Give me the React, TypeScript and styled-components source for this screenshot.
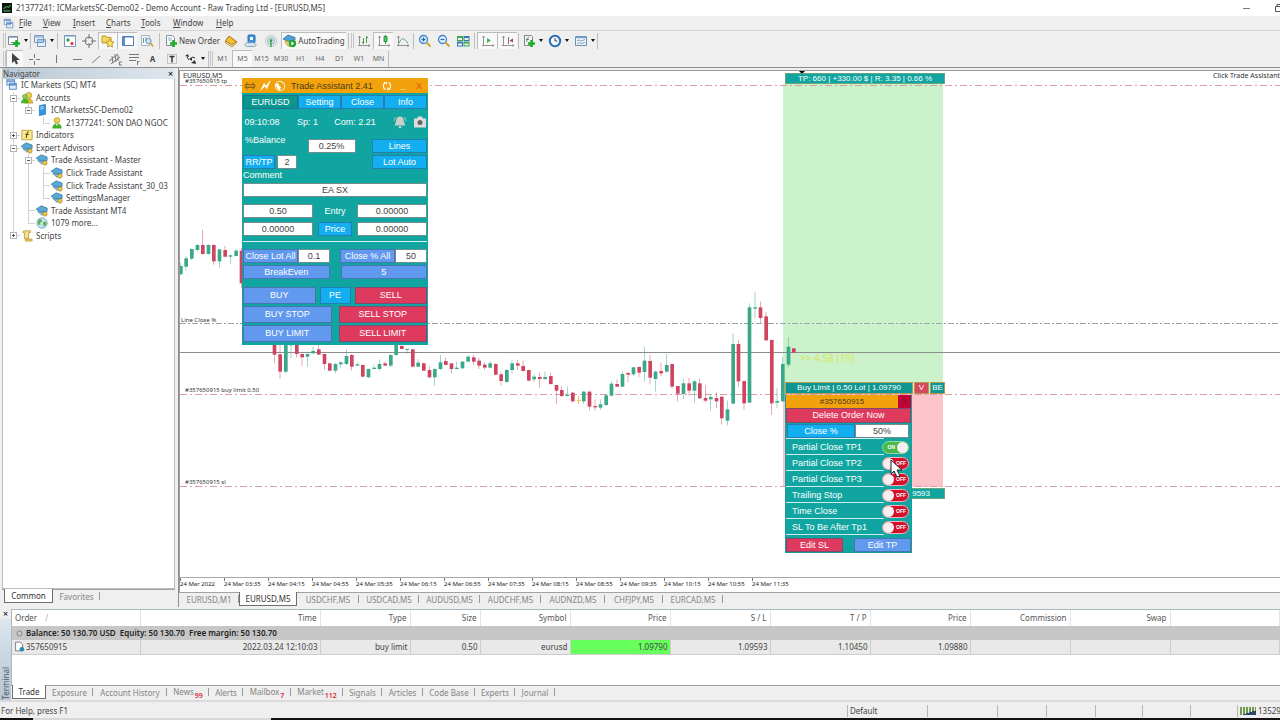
import React from "react";
import styled, { createGlobalStyle, css } from "styled-components";

const ui = `"Noto Sans", "Open Sans", sans-serif`;
const arial = `"Liberation Sans", Arial, sans-serif`;

const teal = "#10a5a0";
const sky = "#12aef0";
const cornflower = "#6199ee";
const crimson = "#dd3a5e";
const orange = "#f2a30c";

const Global = createGlobalStyle`
  * { box-sizing: border-box; }
  body { margin: 0; background: #efefef; font: 8px/12px ${ui}; color: #444; }
  button, input { font: inherit; color: inherit; margin: 0; padding: 0; border: 0; background: none; border-radius: 0; }
  ul { list-style: none; margin: 0; padding: 0; }
  svg { display: block; flex: none; }
`;

const Window = styled.div`
  min-height: 100vh;
  display: flex;
  flex-direction: column;
  overflow: hidden;
`;

/* ---------- title and menu ---------- */

const TitleBar = styled.header`
  display: flex;
  align-items: center;
  height: 16px;
  padding-left: 2px;
  background: #fff;
  gap: 4px;
  overflow: hidden;
  white-space: nowrap;
`;
const WindowButtons = styled.div`
  display: flex;
  gap: 24px;
  margin-left: auto;
  margin-right: -2px;
`;
const WindowButton = styled.button`
  width: 8px;
  height: 10px;
`;
const MenuBar = styled.nav`
  display: flex;
  align-items: center;
  height: 15px;
  padding-left: 3px;
  border-bottom: 1px solid #d6d6d6;
`;
const MenuItem = styled.button<{ $w: number }>`
  width: ${(p) => p.$w}px;
  text-align: left;
  padding-left: 5px;
  &::first-letter { text-decoration: underline; }
`;

/* ---------- toolbars ---------- */

const Toolbar = styled.div`
  display: flex;
  align-items: center;
  height: 18px;
  padding: 1px 0 0 3px;
`;
const Grip = styled.span`
  width: 3px;
  height: 15px;
  border: solid #c4c4c4;
  border-width: 0 1px;
`;
const Sep = styled.span<{ $m?: number }>`
  width: 1px;
  height: 16px;
  margin: 0 ${(p) => p.$m ?? 2}px;
  background: #bdbdbd;
`;
const Tool = styled.button<{ $w?: number; $on?: boolean }>`
  display: flex;
  align-items: center;
  justify-content: center;
  flex: none;
  gap: 1px;
  width: ${(p) => p.$w ?? 19}px;
  height: 17px;
  white-space: nowrap;
  ${(p) =>
    p.$on &&
    css`
      background: #f8f8f8;
      border: solid #bcbcbc;
      border-width: 1px 0 0 1px;
    `}
`;
const Period = styled(Tool)`
  font-size: 7px;
  color: #666;
`;
const Caret = styled.span`
  margin-left: 2px;
  border: solid transparent;
  border-width: 3px 2px 0;
  border-top-color: #111;
`;

const Icon = ({ s = 14, children }: { s?: number; children: React.ReactNode }) => (
  <svg width={s} height={s} viewBox="0 0 14 14" fill="none" aria-hidden="true">
    {children}
  </svg>
);
const Plus = () => <path d="M9.5 6v7M6 9.5h7" stroke="#1fae2b" strokeWidth="2.6" />;
const NewChartIcon = () => (
  <Icon><path d="M1.5 2.5h9v8h-9z" fill="#fff" stroke="#7d8b99" /><path d="M2 3.5h8" stroke="#9cc0e4" /><path d="M4 8.500h4" stroke="#5a9a60" /><Plus /></Icon>
);
const ProfilesIcon = () => (
  <Icon><path d="M1.5 1.5h9v7h-9zM4.5 5.5h8v7h-8z" fill="#e4f0fb" stroke="#7d98b8" /><path d="M2 3h8M5 7h7" stroke="#6da0d8" strokeWidth="1.2" /></Icon>
);
const MarketIcon = () => (
  <Icon><path d="M1.5 1.5h11v11h-11z" fill="#fff" stroke="#7c98b6" /><path d="M2 2.5h10" stroke="#a8cbec" /><circle cx="5" cy="6" r="1.7" fill="#2aa84a" /><circle cx="9" cy="9.5" r="1.7" fill="#e0474a" /></Icon>
);
const TargetIcon = () => (
  <Icon><circle cx="7" cy="7" r="4" stroke="#777" /><path d="M7 0v5M7 9v5M0 7h5M9 7h5" stroke="#777" /></Icon>
);
const FolderStarIcon = () => (
  <Icon><path d="M1 2h4l1 1.500h4V9H1z" fill="#f5d75e" stroke="#b99a2c" /><path d="M9 5l1.300 2.600 2.700.4-2 2 .5 3L9 11.600 6.500 13l.5-3-2-2 2.700-.4z" fill="#fbe36a" stroke="#b08a1c" strokeWidth=".8" /></Icon>
);
const PanelIcon = () => (
  <Icon><path d="M1.500 2.500h11v9h-11z" fill="#fff" stroke="#4d7fb5" /><path d="M2 3h2v8H2z" fill="#5591cc" /><path d="M4 3.500h8" stroke="#9ec4e8" /></Icon>
);
const TesterIcon = () => (
  <Icon><path d="M1.500 1.500h8v10h-8z" fill="#f4f8fc" stroke="#a5b5c5" /><path d="M3.500 9V4M6 7V3" stroke="#6e9a7c" /><circle cx="8.500" cy="7" r="2.600" fill="#cfe6fa" stroke="#6a93bb" /><path d="M10.500 9l2.500 3.500" stroke="#d0a23a" strokeWidth="1.600" /></Icon>
);
const OrderIcon = () => (
  <Icon><path d="M2.500 1.500h6l2 2v8h-8z" fill="#fff" stroke="#8090a0" /><path d="M4 4h4M4 6h4" stroke="#8fb1d1" /><Plus /></Icon>
);
const BookIcon = () => (
  <Icon><path d="M1.500 7L5 2l7.500 5.500L8 11z" fill="#f3bf35" stroke="#a87413" /><path d="M1.500 7l.3 2L8 13l4.500-4V7.500L8 11z" stroke="#a87413" fill="#fff0bd" strokeWidth=".8" /></Icon>
);
const VpsIcon = () => (
  <Icon><rect x="4" y="1" width="7" height="7.500" rx="1" fill="#3d93e2" stroke="#2b6db0" /><path d="M6 3h3v3H6z" fill="#fff" /><path d="M1 11c0-2 2-3 4-2 3-1 7 0 7 2 0 1-1 1.500-2 1.500H3c-1 0-2-.5-2-1.500z" fill="#d8e6f2" stroke="#7898b5" strokeWidth=".8" /></Icon>
);
const SignalIcon = () => (
  <Icon><circle cx="7" cy="7" r="5.500" stroke="#b4c8d0" /><circle cx="7" cy="7" r="3.300" stroke="#7fabbd" /><circle cx="7" cy="6.500" r="1.500" fill="#37a34a" /><path d="M7 7v6" stroke="#37a34a" strokeWidth="1.400" /></Icon>
);
const AutoIcon = () => (
  <Icon><path d="M0 5l5-4 7 2.500V6L7 8z" fill="#4d9fd8" stroke="#2d76a8" strokeWidth=".8" /><path d="M2 6.500c0 3 3 6 5 6V8z" fill="#f0d060" stroke="#a98c2b" strokeWidth=".7" /><circle cx="9.500" cy="9.500" r="3.700" fill="#1fa838" /><path d="M8.300 7.500v4l3-2z" fill="#fff" /></Icon>
);
const Axes = () => <path d="M2.500 2v10M1 11.500h12M1.500 3.500l1-1.500 1 1.500M11.500 10.500l1.500 1-1.500 1" stroke="#888" strokeWidth=".9" />;
const BarsIcon = () => (<Icon><Axes /><path d="M6.500 4v6M6.500 8.500h-1.500M9.500 2v7M9.500 3.500h1.500" stroke="#4c9a5c" /></Icon>);
const CandleIcon = () => (<Icon><Axes /><path d="M8.500 1v9" stroke="#2a9a3c" /><path d="M7 2.500h3v5H7z" fill="#45c95a" stroke="#2a9a3c" /></Icon>);
const LineIcon = () => (<Icon><Axes /><path d="M3 9c2-4 4-5 5-4s2 2 4 4" stroke="#4c9a5c" /></Icon>);
const ZoomIcon = ({ plus }: { plus?: boolean }) => (
  <Icon><circle cx="5.500" cy="5.500" r="4" fill="#e3f2fd" stroke="#3e86c8" strokeWidth="1.300" /><path d={plus ? "M3.500 5.500h4M5.500 3.500v4" : "M3.500 5.500h4"} stroke="#2b6cab" strokeWidth="1.300" /><path d="M8.500 8.500l4 4" stroke="#d3a434" strokeWidth="2" /></Icon>
);
const TileIcon = () => (
  <Icon><path d="M1 2h6v5H1zM7.500 7.500h6v5h-6z" fill="#3fa54d" /><path d="M7.500 2h6v5h-6zM1 7.500h6v5H1z" fill="#3877b8" /><path d="M2 4h4v2H2zM8.500 4h4v2h-4zM2 9.500h4v2H2zM8.500 9.500h4v2h-4z" fill="#e8f4ea" /></Icon>
);
const ScrollIcon = () => (<Icon><Axes /><path d="M6 4v5l4-2.500z" fill="#45b35a" /></Icon>);
const ShiftIcon = () => (<Icon><Axes /><path d="M7.500 3v7" stroke="#777" /><path d="M12 4.500v4L8.500 6.500z" fill="#a04848" /></Icon>);
const IndicatorIcon = () => (
  <Icon><path d="M2.500 1.500h7l1 1v9h-8z" fill="#eef3f0" stroke="#7d8b85" /><path d="M4 8c1.500 0 1-5 3-5M4 5.500h3" stroke="#666" strokeWidth=".8" /><Plus /></Icon>
);
const ClockIcon = () => (
  <Icon><circle cx="7" cy="7" r="5.200" fill="#f4f9fe" stroke="#2b6cb2" strokeWidth="2" /><path d="M7 4v3h2.500" stroke="#444" /></Icon>
);
const TemplateIcon = () => (
  <Icon><path d="M1.500 2.500h11v9h-11z" fill="#eef5fb" stroke="#7590ab" /><path d="M2 3.500h10" stroke="#6fa3d6" strokeWidth="1.500" /><path d="M3 7l2-1 2 1 4-1.500M3 10l2-1.500 2 1 4-1" stroke="#6d8aa5" strokeWidth=".8" /></Icon>
);
const Stroke = ({ d, w = 1 }: { d: string; w?: number }) => (<Icon><path d={d} stroke="#777" strokeWidth={w} /></Icon>);

const DropTool = ({ w, label, children }: { w: number; label: string; children: React.ReactNode }) => (
  <Tool $w={w} aria-label={label}>{children}<Caret /></Tool>
);

const TopToolbars = () => (
  <>
    <Toolbar>
      <Grip />
      <DropTool w={23} label="New chart"><NewChartIcon /></DropTool>
      <Sep $m={1} />
      <DropTool w={23} label="Profiles"><ProfilesIcon /></DropTool>
      <Sep />
      <Tool aria-label="Market watch"><MarketIcon /></Tool>
      <Tool aria-label="Data window"><TargetIcon /></Tool>
      <Tool $on aria-label="Navigator"><FolderStarIcon /></Tool>
      <Tool $w={20} $on aria-label="Terminal"><PanelIcon /></Tool>
      <Tool aria-label="Strategy tester"><TesterIcon /></Tool>
      <Sep $m={3} />
      <Tool $w={58}><OrderIcon />New Order</Tool>
      <Tool $w={20} aria-label="MetaEditor"><BookIcon /></Tool>
      <Tool $w={20} aria-label="Virtual hosting"><VpsIcon /></Tool>
      <Tool $w={20} aria-label="Signals"><SignalIcon /></Tool>
      <Tool $w={65} $on><AutoIcon />AutoTrading</Tool>
      <Sep />
      <Grip />
      <Tool aria-label="Bar chart"><BarsIcon /></Tool>
      <Tool $w={20} $on aria-label="Candlesticks"><CandleIcon /></Tool>
      <Tool aria-label="Line chart"><LineIcon /></Tool>
      <Sep $m={1} />
      <Tool aria-label="Zoom in"><ZoomIcon plus /></Tool>
      <Tool aria-label="Zoom out"><ZoomIcon /></Tool>
      <Tool aria-label="Tile windows"><TileIcon /></Tool>
      <Sep />
      <Tool $w={20} $on aria-label="Auto scroll"><ScrollIcon /></Tool>
      <Tool $w={20} $on aria-label="Chart shift"><ShiftIcon /></Tool>
      <Sep $m={1} />
      <DropTool w={25} label="Indicators"><IndicatorIcon /></DropTool>
      <DropTool w={26} label="Periods"><ClockIcon /></DropTool>
      <DropTool w={26} label="Templates"><TemplateIcon /></DropTool>
      <Sep $m={0} />
    </Toolbar>
    <Toolbar>
      <Grip />
      <Tool $w={17} $on aria-label="Cursor">
        <Icon><path d="M4 1v10l2.500-2 1.500 3.500 2-1L8.500 8H12z" fill="#444" /></Icon>
      </Tool>
      <Tool $w={21} aria-label="Crosshair"><Stroke d="M7.500 2v4M7.500 9v4M2 7.500h4M9 7.500h4" /></Tool>
      <Tool $w={23} aria-label="Vertical line"><Stroke d="M7.500 3v8" /></Tool>
      <Tool aria-label="Horizontal line"><Stroke d="M3 7.500h9" /></Tool>
      <Tool aria-label="Trend line"><Stroke d="M3 11l8-7" /></Tool>
      <Tool aria-label="Channel"><Stroke d="M1 9l9-7M3 12l9-7M4 4l1 7M7 2l1 8M10 3v6M11 10h3M11 13h3M11.500 10v3" /></Tool>
      <Tool aria-label="Fibonacci"><Stroke d="M2 2.500h10M2 5.500h10M2 8.500h7M10.500 9v4M10.500 9.500h2" /></Tool>
      <Tool><b>A</b></Tool>
      <Tool $w={20} aria-label="Text label">
        <Icon><path d="M2.500 2.500h9v9h-9z" stroke="#999" strokeDasharray="1 1" /><path d="M4.500 4.500h5M7 4.500v6" stroke="#333" strokeWidth="1.500" /></Icon>
      </Tool>
      <DropTool w={25} label="Arrows">
        <Icon><path d="M1 4l3-2 1 3zM5 7l3-2v4zM7 11l4-3 1 4z" fill="#333" /><path d="M3 5l2 3M8 5l3 1" stroke="#333" /></Icon>
      </DropTool>
      <Sep $m={1} />
      <Grip />
      {["M1", "M5", "M15", "M30", "H1", "H4", "D1", "W1", "MN"].map((p, i) => (
        <Period key={p} $w={i % 2 ? 20 : 19} $on={p === "M5"}>{p}</Period>
      ))}
      <Sep $m={0} />
    </Toolbar>
  </>
);

/* ---------- navigator ---------- */

const Workspace = styled.main`
  flex: 1;
  display: flex;
  min-height: 0;
  border-top: 1px solid #8e8e8e;
`;
const Navigator = styled.aside`
  flex: none;
  width: 178px;
  display: flex;
  flex-direction: column;
  padding: 0 3px 3px 2px;
`;
const NavHeader = styled.div`
  display: flex;
  justify-content: space-between;
  align-items: center;
  height: 11px;
  padding: 0 1px;
  background: linear-gradient(90deg, #b9c7d3, #dfe7ee);
`;
const CloseMark = styled.button`
  width: 7px;
  height: 9px;
  font-size: 9px;
  line-height: 9px;
  color: #000;
`;
const TreeBox = styled.div`
  flex: 1;
  background: #fff;
  border: 1px solid #bdbdbd;
  border-top: 0;
`;
const Tree = styled.ul`
  display: grid;
  grid-auto-rows: 1fr;
  height: 163px;
  padding-left: 3px;
`;
const TreeItem = styled.li`
  display: flex;
  align-items: stretch;
`;
const Guide = styled.span<{ $t: string; $last: boolean }>`
  position: relative;
  width: 15px;
  &::before {
    content: "";
    position: absolute;
    left: 7px;
    top: 0;
    height: ${(p) => (p.$t === "e" ? "50%" : "100%")};
    border-left: ${(p) => (p.$t === " " ? 0 : 1)}px solid #d2d2d2;
  }
  &::after {
    content: "";
    position: absolute;
    left: 7px;
    top: 6px;
    width: 7px;
    border-top: ${(p) => (p.$last ? 1 : 0)}px solid #d2d2d2;
  }
`;
const Expander = styled.button`
  position: absolute;
  z-index: 1;
  left: 4px;
  top: 3px;
  width: 7px;
  height: 7px;
  background: #fff;
  border: 1px solid #b5b5b5;
`;
const TreeLabel = styled.span`
  display: flex;
  align-items: center;
  gap: 3px;
  white-space: nowrap;
`;

const ServersIcon = () => (<Icon s={12}><path d="M1 1h9v6H1zM4 5h8v7H4z" fill="#dfeefc" stroke="#5b8fc9" strokeWidth="1.200" /><path d="M1 2.500h9M4 6.500h8" stroke="#5b8fc9" strokeWidth="1.600" /></Icon>);
const AccountsIcon = () => (<Icon s={12}><circle cx="9" cy="4" r="3.500" fill="#f0cd42" stroke="#9d7f18" strokeWidth=".7" /><path d="M4 13c0-7 10-7 10 0z" fill="#e6b92e" stroke="#9d7f18" strokeWidth=".5" /><circle cx="4.500" cy="5.500" r="2.700" fill="#8bd65a" stroke="#3a8f24" strokeWidth=".7" /><path d="M0 13c0-7 9-7 9 0z" fill="#46b52d" /></Icon>);
const ServerIcon = () => (<Icon s={12}><path d="M4 2l7-1.500V12L4 13.500z" fill="#2f97e6" stroke="#1c6fb3" strokeWidth=".8" /><path d="M5 4l4-1M5 6l4-1" stroke="#d4ecff" /></Icon>);
const UserIcon = () => (<Icon s={12}><circle cx="7" cy="4" r="3.300" fill="#f0cf54" stroke="#a3831e" strokeWidth=".7" /><path d="M1.500 13.500c0-8 11-8 11 0z" fill="#3fae2a" /><path d="M6 8l1 3 1-3z" fill="#fff" /></Icon>);
const FxIcon = () => (<Icon s={12}><path d="M1 1.500h12v11H1z" fill="#fbe98a" stroke="#b59a35" /><path d="M9 3.500c-2-.5-2 2-3 7M5 6.500h4" stroke="#4c4220" strokeWidth="1.200" /></Icon>);
const HatIcon = () => (<Icon s={12}><path d="M0 5L6 1l7 2.500 0 4L7 8.500z" fill="#58a8d8" stroke="#2f759f" strokeWidth=".8" /><path d="M2 7.500l5 4.500 4-4-4 .5z" fill="#8fc7e2" stroke="#2f759f" strokeWidth=".8" /><circle cx="10.500" cy="10.500" r="2.500" fill="#f3c843" stroke="#a07c1b" strokeWidth=".8" /></Icon>);
const GlobeIcon = () => (<Icon s={12}><circle cx="7" cy="7" r="6" fill="#c8e6f2" stroke="#4a93b0" strokeWidth=".8" /><path d="M3 3c3-1 5 0 4 2s-3 1-2 3-2 2-3-1zM9 5l3 1v3l-3 2-1-3z" fill="#5fb348" /></Icon>);
const ScrollDocIcon = () => (<Icon s={12}><path d="M3 1h8v2H9v7H4V3H2z" fill="#f5e08a" stroke="#b1963a" strokeWidth=".9" /><path d="M5 10.500h8v2.500H5z" fill="#e8c94f" stroke="#b1963a" strokeWidth=".7" /></Icon>);

const tree: { g: string; box?: "+" | "-"; icon: React.ReactNode; text: string }[] = [
  { g: "", icon: <ServersIcon />, text: "IC Markets (SC) MT4" },
  { g: "t", box: "-", icon: <AccountsIcon />, text: "Accounts" },
  { g: "|e", box: "-", icon: <ServerIcon />, text: "ICMarketsSC-Demo02" },
  { g: "| e", icon: <UserIcon />, text: "21377241: SON DAO NGOC" },
  { g: "t", box: "+", icon: <FxIcon />, text: "Indicators" },
  { g: "t", box: "-", icon: <HatIcon />, text: "Expert Advisors" },
  { g: "|t", box: "-", icon: <HatIcon />, text: "Trade Assistant - Master" },
  { g: "||t", icon: <HatIcon />, text: "Click Trade Assistant" },
  { g: "||t", icon: <HatIcon />, text: "Click Trade Assistant_30_03" },
  { g: "||e", icon: <HatIcon />, text: "SettingsManager" },
  { g: "|t", icon: <HatIcon />, text: "Trade Assistant MT4" },
  { g: "|e", icon: <GlobeIcon />, text: "1079 more..." },
  { g: "e", box: "+", icon: <ScrollDocIcon />, text: "Scripts" },
];

/* ---------- tab strips ---------- */

const TabStrip = styled.div<{ $pad?: number }>`
  display: flex;
  flex: none;
  height: 15px;
  padding-left: ${(p) => p.$pad ?? 0}px;
  border-top: 1px solid #a2a2a2;
`;
const Tab = styled.button<{ $w: number; $on?: boolean }>`
  position: relative;
  flex: none;
  width: ${(p) => p.$w}px;
  height: 14px;
  margin-top: -1px;
  line-height: 13px;
  white-space: nowrap;
  color: #858585;
  ${(p) =>
    p.$on
      ? css`
          color: #333;
          background: #fff;
          border: solid #6e6e6e;
          border-width: 0 1px 1px;
        `
      : css`
          &::after {
            content: "";
            position: absolute;
            right: 0;
            top: 3px;
            height: 8px;
            border-right: 1px solid #9a9a9a;
          }
        `}
`;
const Count = styled.sub`
  margin-left: 1px;
  font-size: 7px;
  line-height: 7px;
  color: #d8283c;
  font-weight: 600;
`;

/* ---------- chart ---------- */

const ChartPane = styled.section`
  flex: 1;
  min-width: 0;
  display: flex;
  flex-direction: column;
  border-left: 1px solid #8e8e8e;
`;
const ChartFrame = styled.div`
  flex: 1;
  display: flex;
  flex-direction: column;
  margin-top: 2px;
  border: solid #9a9a9a;
  border-width: 1px 0 0 1px;
  background: #fff;
`;
const Canvas = styled.div`
  position: relative;
  flex: 1;
  overflow: hidden;
  font-size: 7px;
  line-height: 8px;
`;
const Drawing = styled.svg`
  position: absolute;
  inset: 0;
  width: 100%;
  height: 100%;
`;
const ChartNote = styled.span<{ $x: number; $y: number; $c?: string; $s?: number }>`
  position: absolute;
  left: ${(p) => p.$x}px;
  top: ${(p) => p.$y}px;
  white-space: nowrap;
  color: ${(p) => p.$c ?? "#333"};
  font-size: ${(p) => p.$s ?? 7}px;
`;
const ExpertName = styled.span`
  position: absolute;
  right: 0;
  top: 1px;
  white-space: nowrap;
  color: #333;
`;
const TimeAxis = styled.div`
  display: flex;
  height: 15px;
  border-top: 1px solid #a8a8a8;
  overflow: hidden;
  font-size: 6px;
  line-height: 12px;
  color: #222;
`;
const Tick = styled.span`
  position: relative;
  flex: none;
  width: 44px;
  white-space: nowrap;
  &::before {
    content: "";
    position: absolute;
    height: 3px;
    border-left: 1px solid #777;
  }
`;
const Floating = styled.div<{ $x: number; $y: number; $w: number }>`
  position: absolute;
  left: ${(p) => p.$x}px;
  top: ${(p) => p.$y}px;
  width: ${(p) => p.$w}px;
  font: 9px/12px ${arial};
  color: #fff;
`;

const G = "#3aa889";
const R = "#cf4560";
type Candle = [x: number, top: number, bottom: number, high: number, low: number, up: 0 | 1];
/* Candle values are in thirds of a pixel inside each block. */
const early: Candle[] = [
  [14, 138, 163, 128, 165, 1], [30, 115, 140, 108, 153, 1], [47, 87, 116, 85, 120, 1], [64, 75, 90, 73, 95, 1],
  [80, 75, 102, 30, 104, 0], [97, 75, 102, 73, 104, 1], [113, 75, 124, 73, 134, 0], [130, 88, 124, 88, 143, 1],
  [147, 90, 110, 78, 112, 0], [163, 106, 110, 103, 132, 1], [180, 92, 108, 86, 110, 1], [196, 92, 190, 84, 205, 0],
  [295, 370, 404, 370, 430, 0], [312, 403, 455, 375, 476, 0], [329, 370, 455, 370, 460, 1], [345, 370, 376, 370, 415, 1],
  [362, 370, 402, 370, 413, 0], [378, 402, 412, 400, 438, 0], [394, 402, 410, 395, 440, 1], [411, 393, 400, 380, 402, 1],
  [428, 388, 404, 375, 404, 0], [445, 402, 432, 402, 450, 0], [461, 430, 452, 428, 454, 0], [478, 432, 452, 428, 460, 1],
  [494, 427, 433, 425, 443, 1], [511, 408, 432, 388, 435, 1], [527, 405, 440, 403, 452, 0], [544, 433, 437, 425, 437, 1],
  [560, 435, 470, 433, 472, 0], [577, 447, 472, 445, 473, 1], [594, 443, 447, 434, 448, 1], [610, 432, 447, 418, 452, 1],
  [627, 430, 437, 424, 437, 0], [644, 405, 437, 403, 440, 1], [660, 370, 405, 370, 408, 1], [677, 378, 387, 376, 388, 0],
  [693, 387, 390, 386, 402, 1], [710, 388, 440, 387, 441, 0], [726, 428, 440, 417, 441, 1], [743, 430, 452, 427, 453, 0],
  [760, 450, 472, 440, 473, 0], [776, 447, 472, 445, 498, 1], [793, 427, 447, 405, 450, 1], [809, 423, 435, 413, 435, 0],
  [826, 430, 447, 430, 460, 0], [842, 443, 447, 425, 448, 1], [859, 425, 445, 423, 446, 1], [876, 410, 425, 405, 426, 1],
  [893, 412, 425, 405, 435, 0], [909, 422, 437, 413, 447, 0], [926, 434, 443, 427, 450, 0], [942, 430, 443, 423, 444, 1],
  [959, 432, 464, 430, 466, 0], [975, 463, 483, 455, 497, 0], [992, 450, 486, 447, 487, 1], [1008, 430, 450, 418, 460, 1],
  [1025, 430, 437, 420, 450, 0],
];
const late: Candle[] = [
  [9, 258, 273, 242, 275, 0], [26, 270, 302, 269, 303, 0], [42, 290, 298, 283, 306, 1], [59, 291, 297, 278, 323, 0],
  [75, 291, 297, 275, 300, 1], [92, 288, 312, 278, 314, 0], [109, 315, 332, 315, 372, 0], [125, 330, 348, 318, 351, 0],
  [142, 344, 348, 320, 349, 1], [158, 338, 364, 336, 368, 0], [191, 335, 364, 333, 372, 1], [208, 335, 380, 333, 392, 0],
  [225, 378, 382, 358, 392, 0], [241, 373, 383, 358, 390, 1], [258, 346, 375, 342, 378, 1], [274, 311, 347, 303, 349, 1],
  [291, 312, 320, 298, 320, 0], [307, 282, 320, 274, 321, 1], [324, 279, 284, 276, 307, 0], [340, 262, 283, 260, 288, 1],
  [357, 261, 278, 259, 292, 0], [373, 242, 276, 200, 306, 1], [390, 243, 293, 225, 313, 0], [406, 275, 297, 272, 335, 1],
  [423, 273, 280, 248, 288, 0], [440, 255, 275, 222, 278, 1], [456, 252, 320, 252, 325, 0], [473, 318, 341, 318, 365, 0],
  [490, 310, 342, 298, 358, 1], [507, 310, 332, 294, 348, 0], [523, 304, 332, 300, 370, 1], [539, 310, 355, 296, 357, 0],
  [556, 354, 362, 316, 368, 0], [572, 351, 358, 342, 392, 1], [589, 354, 364, 337, 385, 0], [605, 350, 415, 350, 433, 0],
  [622, 388, 422, 362, 436, 1], [639, 192, 371, 160, 371, 1], [655, 192, 304, 180, 320, 0], [672, 303, 370, 303, 390, 0],
  [688, 82, 368, 70, 368, 1], [705, 82, 86, 35, 116, 1], [721, 82, 114, 65, 130, 0], [738, 109, 181, 96, 183, 0],
  [755, 180, 370, 178, 405, 0], [771, 363, 368, 325, 384, 1], [788, 252, 364, 230, 366, 1], [805, 200, 254, 172, 262, 1],
  [821, 205, 218, 204, 219, 0],
];
const Candles = ({ data, ox, oy }: { data: Candle[]; ox: number; oy: number }) => (
  <g transform={`translate(${ox} ${oy}) scale(0.33333)`}>
    {data.map(([x, top, bottom, high, low, up]) => (
      <g key={x} fill={up ? G : R}>
        <rect x={x - 1} y={high} width="2" height={low - high} opacity=".7" />
        <rect x={x - 5} y={top} width="11" height={bottom - top} />
      </g>
    ))}
  </g>
);

const ChartDrawing = () => (
  <Drawing aria-hidden="true">
    <g transform="translate(-180 -71)">
      <rect x="783" y="84" width="160" height="310" fill="#ccf2cb" />
      <rect x="783" y="394" width="160" height="93" fill="#fcc3cb" />
      <g stroke="#dd9ba6" strokeDasharray="7 3 2 3">
        <path d="M180 85.500H2600M180 394.500H2600M180 486.500H2600" />
      </g>
      <path d="M180 323.500H2600" stroke="#9aa6a6" strokeDasharray="6 2 2 2" />
      <path d="M180 352.500H2600" stroke="#8c8c8c" />
      <Candles data={early} ox={176} oy={220} />
      <Candles data={late} ox={520} oy={280} />
      <path d="M578.500 396v8M577 400.500h4" stroke="#f3c65a" />
      <path d="M799 71h6l-3 3z" fill="#000" />
    </g>
  </Drawing>
);

/* ---------- trade assistant panel ---------- */

const TradePanel = styled(Floating)`
  background: ${teal};
  padding-bottom: 3px;
`;
const PanelTitle = styled.div`
  display: flex;
  align-items: center;
  height: 15px;
  padding: 0 1px 0 2px;
  background: ${orange};
  color: #4c3a1c;
`;
const TitleIcons = styled.div`
  display: flex;
  gap: 3px;
  width: 47px;
`;
const TitleText = styled.span`
  flex: 1;
  font-size: 9px;
`;
const TitleButton = styled.button<{ $c?: string }>`
  width: 16px;
  display: flex;
  justify-content: center;
  color: ${(p) => p.$c ?? "#fff"};
`;
const PanelRow = styled.div<{ $mt?: number; $gap?: number; $end?: boolean }>`
  display: flex;
  align-items: ${(p) => (p.$end ? "flex-end" : "center")};
  justify-content: space-between;
  gap: ${(p) => p.$gap ?? 0}px;
  margin-top: ${(p) => p.$mt ?? 0}px;
  padding: 0 1px;
`;
const PanelButton = styled.button<{ $bg: string; $w?: number; $h?: number }>`
  flex: ${(p) => (p.$w ? "none" : 1)};
  width: ${(p) => (p.$w ? `${p.$w}px` : "auto")};
  height: ${(p) => p.$h ?? 14}px;
  background: ${(p) => p.$bg};
  border: 1px solid rgba(50, 90, 130, 0.55);
  line-height: 11px;
  white-space: nowrap;
  text-align: center;
`;
const WideButton = styled(PanelButton)`
  display: block;
  width: 100%;
`;
const Field = styled.input<{ $w?: number }>`
  flex: ${(p) => (p.$w ? "none" : 1)};
  width: ${(p) => (p.$w ? `${p.$w}px` : "auto")};
  min-width: 0;
  height: 14px;
  background: #fff;
  border: 1px solid #6f8f8f;
  color: #444;
  line-height: 12px;
  text-align: center;
`;
const Text = styled.span<{ $w?: number }>`
  width: ${(p) => (p.$w ? `${p.$w}px` : "auto")};
  text-align: center;
  white-space: nowrap;
`;
const FieldLabel = styled.label<{ $pad?: number }>`
  display: block;
  padding-left: ${(p) => p.$pad ?? 0}px;
`;
const Pair = styled.div<{ $w: number; $gap?: number }>`
  display: flex;
  align-items: center;
  gap: ${(p) => p.$gap ?? 0}px;
  width: ${(p) => p.$w}px;
`;
const Stack = styled.div<{ $gap?: number }>`
  display: flex;
  flex-direction: column;
  gap: ${(p) => p.$gap ?? 2}px;
`;
const BalanceField = styled.div`
  padding: 0 6px 16px 0;
  display: flex;
`;
const Rule = styled.hr`
  height: 1px;
  border: 0;
  margin: 5px 1px 7px;
  background: #d8f2f0;
`;

const TradeAssistant = () => (
  <TradePanel $x={62} $y={7} $w={186}>
    <PanelTitle>
      <TitleIcons>
        <Icon s={12}><path d="M2 5.500h10M2 8.500h10M4 3L1 7l3 4M10 3l3 4-3 4" stroke="#5c4a20" /></Icon>
        <Icon s={12}><path d="M2 12l4-8 2 3 5-6-4 9-2-3z" fill="#fff" stroke="#fff" strokeWidth=".8" /></Icon>
        <Icon s={12}><circle cx="7" cy="7" r="5.500" stroke="#fff" /><path d="M2 4c3 0 4 0 4 2s3 1 2 3-1 3-3 2-1-3-3-4zM8 2c1 2 2 2 4 3z" fill="#fff" /></Icon>
      </TitleIcons>
      <TitleText>Trade Assistant 2.41</TitleText>
      <TitleButton aria-label="Refresh"><Icon s={10}><path d="M5 2c-4 1-4 9 0 10M9 2c4 1 4 9 0 10M3 2h3v3M11 12H8V9" stroke="#fff" strokeWidth="1.500" /></Icon></TitleButton>
      <TitleButton><b>_</b></TitleButton>
      <TitleButton $c="#e8501c">X</TitleButton>
    </PanelTitle>
    <PanelRow $mt={2}>
      <PanelButton $bg="#0b9690" $w={55}>EURUSD</PanelButton>
      <PanelButton $bg={sky}>Setting</PanelButton>
      <PanelButton $bg={sky}>Close</PanelButton>
      <PanelButton $bg={sky}>Info</PanelButton>
    </PanelRow>
    <PanelRow $mt={6}>
      <Text $w={38}>09:10:08</Text>
      <Text $w={20}>Sp: 1</Text>
      <Text $w={44}>Com: 2.21</Text>
      <Pair $w={34} $gap={6}>
        <Icon s={14}><path d="M7 1.500c-3 0-4 3-4 5.500L1.500 10.500h11L11 7c0-2.500-1-5.500-4-5.500z" fill="#c9cfca" /><path d="M5 11.500h4l-2 2z" fill="#e8e8e8" /><path d="M2.500 2L1 6M11.500 2L13 6" stroke="#b5c2a8" /></Icon>
        <Icon s={14}><path d="M1 3.500h3L5 1.500h4l1 2h3V12.500H1z" fill="#dcdcdc" /><circle cx="7" cy="7.500" r="2.500" fill="#666" /></Icon>
      </Pair>
    </PanelRow>
    <PanelRow $mt={5} $end>
      <Stack $gap={9}>
        <FieldLabel $pad={2} htmlFor="balance">%Balance</FieldLabel>
        <Pair $w={54} $gap={2}>
          <PanelButton $bg={sky} $w={32}>RR/TP</PanelButton>
          <Field $w={20} defaultValue="2" aria-label="Risk reward" />
        </Pair>
      </Stack>
      <BalanceField><Field id="balance" $w={48} defaultValue="0.25%" /></BalanceField>
      <Stack $gap={2}>
        <PanelButton $bg={sky} $w={55}>Lines</PanelButton>
        <PanelButton $bg={sky} $w={55}>Lot Auto</PanelButton>
      </Stack>
    </PanelRow>
    <FieldLabel $pad={1} htmlFor="comment">Comment</FieldLabel>
    <PanelRow $mt={2}><Field id="comment" defaultValue="EA SX" /></PanelRow>
    <PanelRow $mt={7}>
      <Field $w={70} defaultValue="0.50" aria-label="Lot" />
      <Text $w={34}>Entry</Text>
      <Field $w={70} defaultValue="0.00000" aria-label="Entry" />
    </PanelRow>
    <PanelRow $mt={4}>
      <Field $w={70} defaultValue="0.00000" aria-label="Stop loss" />
      <PanelButton $bg={sky} $w={34}>Price</PanelButton>
      <Field $w={70} defaultValue="0.00000" aria-label="Price" />
    </PanelRow>
    <Rule />
    <PanelRow>
      <Pair $w={87}>
        <PanelButton $bg={cornflower} $w={55}>Close Lot All</PanelButton>
        <Field defaultValue="0.1" aria-label="Close lot" />
      </Pair>
      <Pair $w={87}>
        <PanelButton $bg={cornflower} $w={55}>Close % All</PanelButton>
        <Field defaultValue="50" aria-label="Close percent" />
      </Pair>
    </PanelRow>
    <PanelRow $mt={2} $gap={11}>
      <PanelButton $bg={cornflower}>BreakEven</PanelButton>
      <PanelButton $bg={cornflower}>5</PanelButton>
    </PanelRow>
    <PanelRow $mt={8} $gap={4}>
      <PanelButton $bg={cornflower} $h={17}>BUY</PanelButton>
      <PanelButton $bg={sky} $w={31} $h={17}>PE</PanelButton>
      <PanelButton $bg={crimson} $h={17}>SELL</PanelButton>
    </PanelRow>
    <PanelRow $mt={2} $gap={7}>
      <PanelButton $bg={cornflower} $h={17}>BUY STOP</PanelButton>
      <PanelButton $bg={crimson} $h={17}>SELL STOP</PanelButton>
    </PanelRow>
    <PanelRow $mt={2} $gap={7}>
      <PanelButton $bg={cornflower} $h={17}>BUY LIMIT</PanelButton>
      <PanelButton $bg={crimson} $h={17}>SELL LIMIT</PanelButton>
    </PanelRow>
  </TradePanel>
);

/* ---------- order panel ---------- */

const PriceTag = styled(Floating)`
  height: 11px;
  background: ${teal};
  border: 1px solid #6aa57c;
  font-size: 8px;
  line-height: 10px;
  text-align: center;
  white-space: nowrap;
`;
const StopTag = styled(PriceTag)`
  text-align: right;
  padding-right: 14px;
`;
const OrderBar = styled.div`
  display: flex;
  gap: 1px;
  width: 160px;
`;
const BarCell = styled.button<{ $bg: string; $w?: number }>`
  flex: ${(p) => (p.$w ? "none" : 1)};
  width: ${(p) => (p.$w ? `${p.$w}px` : "auto")};
  height: 12px;
  background: ${(p) => p.$bg};
  border: 1px solid #b59a55;
  font-size: 8px;
  line-height: 10px;
  white-space: nowrap;
`;
const OrderBody = styled.div`
  width: 127px;
  margin-top: 1px;
  background: ${teal};
  border: solid #1f9a94;
  border-width: 0 1px 1px;
`;
const OrderTitle = styled.div`
  display: flex;
  height: 13px;
  background: ${orange};
  color: #4c3a1c;
  font-size: 8px;
  line-height: 13px;
`;
const OrderNumber = styled.span`
  flex: 1;
  text-align: center;
`;
const OrderClose = styled.button`
  width: 13px;
  background: #c00438;
  color: #8a0a2c;
`;
const Options = styled.div`
  padding-top: 1px;
  background: linear-gradient(90deg, #c9efec 98px, transparent 98px) no-repeat 0 0 / 100% 1px;
`;
const OptionRow = styled.label`
  position: relative;
  display: flex;
  align-items: center;
  justify-content: space-between;
  height: 16px;
  padding: 0 2px 0 6px;
  &::before {
    content: "";
    position: absolute;
    left: 0;
    bottom: 0;
    width: 98px;
    border-bottom: 1px solid #c9efec;
  }
`;
const Check = styled.input`
  position: absolute;
  right: 2px;
  width: 27px;
  height: 13px;
  opacity: 0;
`;
const Track = styled.span<{ $on: boolean }>`
  display: flex;
  flex-direction: ${(p) => (p.$on ? "row-reverse" : "row")};
  align-items: center;
  gap: 2px;
  width: 27px;
  height: 13px;
  border: 1px solid ${(p) => (p.$on ? "#9ad79a" : "#e7b9bd")};
  border-radius: 7px;
  background: ${(p) => (p.$on ? "#4bb84e" : "#d3112f")};
  font-size: 5px;
  font-weight: bold;
  line-height: 11px;
`;
const Knob = styled.span`
  width: 11px;
  height: 11px;
  border-radius: 50%;
  background: #f6eef0;
`;
const OrderFooter = styled.div`
  display: flex;
  justify-content: space-between;
  margin-top: 3px;
`;
const Pointer = styled.svg`
  position: absolute;
  left: 710px;
  top: 388px;
`;

const options: [string, boolean][] = [
  ["Partial Close TP1", true],
  ["Partial Close TP2", false],
  ["Partial Close TP3", false],
  ["Trailing Stop", false],
  ["Time Close", false],
  ["SL To Be After Tp1", false],
];

const Option = ({ label, initial }: { label: string; initial: boolean }) => {
  const [on, setOn] = React.useState(initial);
  return (
    <OptionRow>
      {label}
      <Check type="checkbox" checked={on} onChange={() => setOn(!on)} />
      <Track $on={on}><Knob />{on ? "ON" : "OFF"}</Track>
    </OptionRow>
  );
};

const OrderPanel = () => (
  <Floating $x={605} $y={311} $w={160}>
    <OrderBar>
      <BarCell $bg="#109690">Buy Limit | 0.50 Lot | 1.09790</BarCell>
      <BarCell $bg="#d4485c" $w={15}>V</BarCell>
      <BarCell $bg="#109690" $w={15}>BE</BarCell>
    </OrderBar>
    <OrderBody>
      <OrderTitle>
        <OrderNumber>#357650915</OrderNumber>
        <OrderClose>X</OrderClose>
      </OrderTitle>
      <WideButton $bg={crimson} $h={15}>Delete Order Now</WideButton>
      <PanelRow $mt={1}>
        <PanelButton $bg={sky} $w={68}>Close %</PanelButton>
        <Field $w={54} defaultValue="50%" aria-label="Close percent of order" />
        <Text $w={1} />
      </PanelRow>
      <Options>
        {options.map(([label, on]) => <Option key={label} label={label} initial={on} />)}
      </Options>
      <OrderFooter>
        <PanelButton $bg={crimson} $w={57}>Edit SL</PanelButton>
        <PanelButton $bg={cornflower} $w={57}>Edit TP</PanelButton>
      </OrderFooter>
    </OrderBody>
  </Floating>
);

/* ---------- terminal ---------- */

const Terminal = styled.section`
  display: flex;
  flex: none;
  margin-top: 2px;
  border-bottom: 2px solid #dadada;
`;
const TerminalSide = styled.div`
  flex: none;
  width: 11px;
  display: flex;
  flex-direction: column;
  justify-content: space-between;
  align-items: center;
  background: linear-gradient(#efefef 9px, #dce6ee 10px, #b4c6d4);
`;
const SideTitle = styled.span`
  writing-mode: vertical-rl;
  transform: rotate(180deg);
  line-height: 11px;
  color: #555;
`;
const TerminalMain = styled.div`
  flex: 1;
  min-width: 0;
  height: 91px;
  display: flex;
  flex-direction: column;
`;
const TableArea = styled.div`
  flex: 1;
  background: #fff;
  border: solid #a9b7bf;
  border-width: 1px 0 0 1px;
`;
const Orders = styled.table`
  width: 100%;
  table-layout: fixed;
  border-collapse: collapse;
`;
const Cell = styled.td<{ $hot?: boolean; $first?: boolean }>`
  height: 14px;
  padding: 0 2px 0 ${(p) => (p.$first ? 2 : 0)}px;
  background: ${(p) => (p.$hot ? "#66ff5c" : "#e9e9e9")};
  border: solid #cdcdcd;
  border-width: 0 1px 1px 0;
  text-align: ${(p) => (p.$first ? "left" : "right")};
`;
const HeadCell = styled.th`
  height: 16px;
  padding: 0 3px;
  border-right: 1px solid #e4e4e4;
  font-weight: normal;
  color: #555;
  text-align: right;
  &:first-child { text-align: left; }
`;
const BalanceCell = styled.td`
  height: 14px;
  padding: 0 0 0 4px;
  background: #c6c6c6;
  font-weight: 600;
  white-space: pre;
  color: #222;
`;
const Inline = styled.span`
  display: flex;
  align-items: center;
  gap: 1px;
`;
const SortMark = styled.span`
  padding-left: 8px;
  color: #aaa;
`;

const columns = ["Order", "Time", "Type", "Size", "Symbol", "Price", "S / L", "T / P", "Price", "Commission", "Swap", ""];
const widths = [128, 180, 90, 70, 90, 100, 100, 100, 100, 100, 100];
const values = ["2022.03.24 12:10:03", "buy limit", "0.50", "eurusd", "1.09790", "1.09593", "1.10450", "1.09880", "", "", ""];

const terminalTabs: [string, number, string?][] = [
  ["Exposure", 47], ["Account History", 74], ["News", 42, "99"], ["Alerts", 34], ["Mailbox", 48, "7"], ["Market", 52, "112"],
  ["Signals", 39], ["Articles", 41], ["Code Base", 52], ["Experts", 40], ["Journal", 40],
];
const chartTabs: [string, number][] = [
  ["USDCHF,M5", 62], ["USDCAD,M5", 60], ["AUDUSD,M5", 61], ["AUDCHF,M5", 61], ["AUDNZD,M5", 64], ["CHFJPY,M5", 58], ["EURCAD,M5", 60],
];
const times = ["2022", "03:35", "04:15", "04:55", "05:35", "06:15", "06:55", "07:35", "08:15", "08:55", "09:35", "10:15", "10:55", "11:35"];

/* ---------- status bar ---------- */

const StatusBar = styled.footer`
  display: flex;
  align-items: center;
  height: 16px;
  padding: 2px 0 0 1px;
  overflow: hidden;
  white-space: nowrap;
`;
const StatusText = styled.span`
  flex: 1;
`;
const StatusCell = styled.span<{ $w: number }>`
  display: flex;
  align-items: center;
  gap: 2px;
  flex: none;
  width: ${(p) => p.$w}px;
  height: 12px;
  padding-left: 2px;
  border-left: 1px solid #b5b5b5;
`;
const Taskbar = styled.div`
  flex: none;
  height: 2px;
  background: linear-gradient(90deg, #111 33px, #d8d8d8 33px, #d8d8d8 271px, #111 271px);
`;

export default function App() {
  return (
    <Window>
      <Global />
      <TitleBar>
        <Icon s={10}><path d="M0 0h14v14H0z" fill="#111" /><path d="M2 8l4-3 3 1 3-3M2 11h10" stroke="#35a84a" strokeWidth="1.600" /></Icon>
        21377241: ICMarketsSC-Demo02 - Demo Account - Raw Trading Ltd - [EURUSD,M5]
        <WindowButtons>
          <WindowButton aria-label="Minimize"><svg width="8" height="8"><path d="M1 4.500h7" stroke="#777" /></svg></WindowButton>
          <WindowButton aria-label="Restore"><svg width="8" height="8"><path d="M1.500 2.500h5v5h-5zM3 2V.500h5" stroke="#555" fill="none" /></svg></WindowButton>
        </WindowButtons>
      </TitleBar>
      <MenuBar>
        <Icon s={11}><path d="M1.500 1.500h8v7h-8zM4.500 5.500h8v7h-8z" fill="#e4f0fb" stroke="#6c8fb8" /><path d="M2 3h7M5 7h7" stroke="#5b93d3" strokeWidth="1.400" /></Icon>
        <MenuItem $w={24}>File</MenuItem>
        <MenuItem $w={30}>View</MenuItem>
        <MenuItem $w={33}>Insert</MenuItem>
        <MenuItem $w={35}>Charts</MenuItem>
        <MenuItem $w={32}>Tools</MenuItem>
        <MenuItem $w={43}>Window</MenuItem>
        <MenuItem $w={30}>Help</MenuItem>
      </MenuBar>
      <TopToolbars />
      <Workspace>
        <Navigator>
          <NavHeader>Navigator<CloseMark aria-label="Close navigator">×</CloseMark></NavHeader>
          <TreeBox>
            <Tree>
              {tree.map((n) => (
                <TreeItem key={n.text}>
                  {[...n.g].map((t, i) => (
                    <Guide key={i} $t={t} $last={i === n.g.length - 1}>
                      {n.box && i === n.g.length - 1 && (
                        <Expander aria-label={n.text}>
                          <svg width="5" height="5"><path d={n.box === "+" ? "M1 2.500h3M2.500 1v3" : "M1 2.500h3"} stroke="#555" /></svg>
                        </Expander>
                      )}
                    </Guide>
                  ))}
                  <TreeLabel>{n.icon}{n.text}</TreeLabel>
                </TreeItem>
              ))}
            </Tree>
          </TreeBox>
          <TabStrip $pad={2}>
            <Tab $w={49} $on>Common</Tab>
            <Tab $w={47}>Favorites</Tab>
          </TabStrip>
        </Navigator>
        <ChartPane>
          <ChartFrame>
            <Canvas>
              <ChartDrawing />
              <ChartNote $x={3} $y={1}>EURUSD,M5</ChartNote>
              <ChartNote $x={5} $y={6} $s={6}>#357650915 tp</ChartNote>
              <ChartNote $x={1} $y={245} $s={6}>Line Close %</ChartNote>
              <ChartNote $x={5} $y={315} $s={6}>#357650915 buy limit 0.50</ChartNote>
              <ChartNote $x={5} $y={407} $s={6}>#357650915 sl</ChartNote>
              <ExpertName>Click Trade Assistant</ExpertName>
              <ChartNote $x={620} $y={283} $c="#d9e65a" $s={10}>&gt;&gt; 4.58 (19)</ChartNote>
              <PriceTag $x={605} $y={2} $w={160}>TP: 660 | +330.00 $ | R: 3.35 | 0.66 %</PriceTag>
              <StopTag $x={605} $y={417} $w={160}>9593</StopTag>
              <TradeAssistant />
              <OrderPanel />
              <Pointer width="14" height="20" viewBox="0 0 14 20" aria-hidden="true">
                <path d="M1 1v14l3-3 3 6 3-1-3-6h5z" fill="#fff" stroke="#222" />
              </Pointer>
            </Canvas>
            <TimeAxis>
              {times.map((t) => <Tick key={t}>24 Mar {t}</Tick>)}
            </TimeAxis>
          </ChartFrame>
          <TabStrip>
            <Tab $w={60}>EURUSD,M1</Tab>
            <Tab $w={58} $on>EURUSD,M5</Tab>
            {chartTabs.map(([t, w]) => <Tab key={t} $w={w}>{t}</Tab>)}
          </TabStrip>
        </ChartPane>
      </Workspace>
      <Terminal>
        <TerminalSide>
          <CloseMark aria-label="Close terminal">×</CloseMark>
          <SideTitle>Terminal</SideTitle>
        </TerminalSide>
        <TerminalMain>
          <TableArea>
            <Orders>
              <colgroup>{widths.map((w, i) => <col key={i} width={w} />)}<col /></colgroup>
              <thead>
                <tr>
                  {columns.map((c, i) => <HeadCell key={i}>{c}{i === 0 && <SortMark>/</SortMark>}</HeadCell>)}
                </tr>
              </thead>
              <tbody>
                <tr>
                  <BalanceCell colSpan={12}>
                    <Inline>
                      <Icon s={7}><circle cx="7" cy="7" r="5" stroke="#888" strokeWidth="2" /></Icon>
                      {" Balance: 50 130.70 USD  Equity: 50 130.70  Free margin: 50 130.70"}
                    </Inline>
                  </BalanceCell>
                </tr>
                <tr>
                  <Cell $first>
                    <Inline>
                      <Icon s={11}><path d="M2 1.500h6l3 3v8H2z" fill="#fff" stroke="#667" /><circle cx="10" cy="10.500" r="3" fill="#2d88b8" /></Icon>
                      357650915
                    </Inline>
                  </Cell>
                  {values.map((v, i) => <Cell key={i} $hot={i === 4}>{v}</Cell>)}
                </tr>
              </tbody>
            </Orders>
          </TableArea>
          <TabStrip $pad={1}>
            <Tab $w={34} $on>Trade</Tab>
            {terminalTabs.map(([t, w, n]) => <Tab key={t} $w={w}>{t}{n && <Count>{n}</Count>}</Tab>)}
          </TabStrip>
        </TerminalMain>
      </Terminal>
      <StatusBar>
        <StatusText>For Help, press F1</StatusText>
        <StatusCell $w={80}>Default</StatusCell>
        {[70, 49, 49, 47, 48, 47].map((w, i) => <StatusCell key={i} $w={w} />)}
        <StatusCell $w={43}>
          <svg width="16" height="8">
            <path d="M0 4h16" stroke="#6f9a4a" strokeWidth="8" strokeDasharray="2 1" />
            <path d="M0 8h3V7h3V6h3V5h3V4h4v4z" fill="#2c4a66" />
          </svg>
          13529
        </StatusCell>
      </StatusBar>
      <Taskbar />
    </Window>
  );
}
